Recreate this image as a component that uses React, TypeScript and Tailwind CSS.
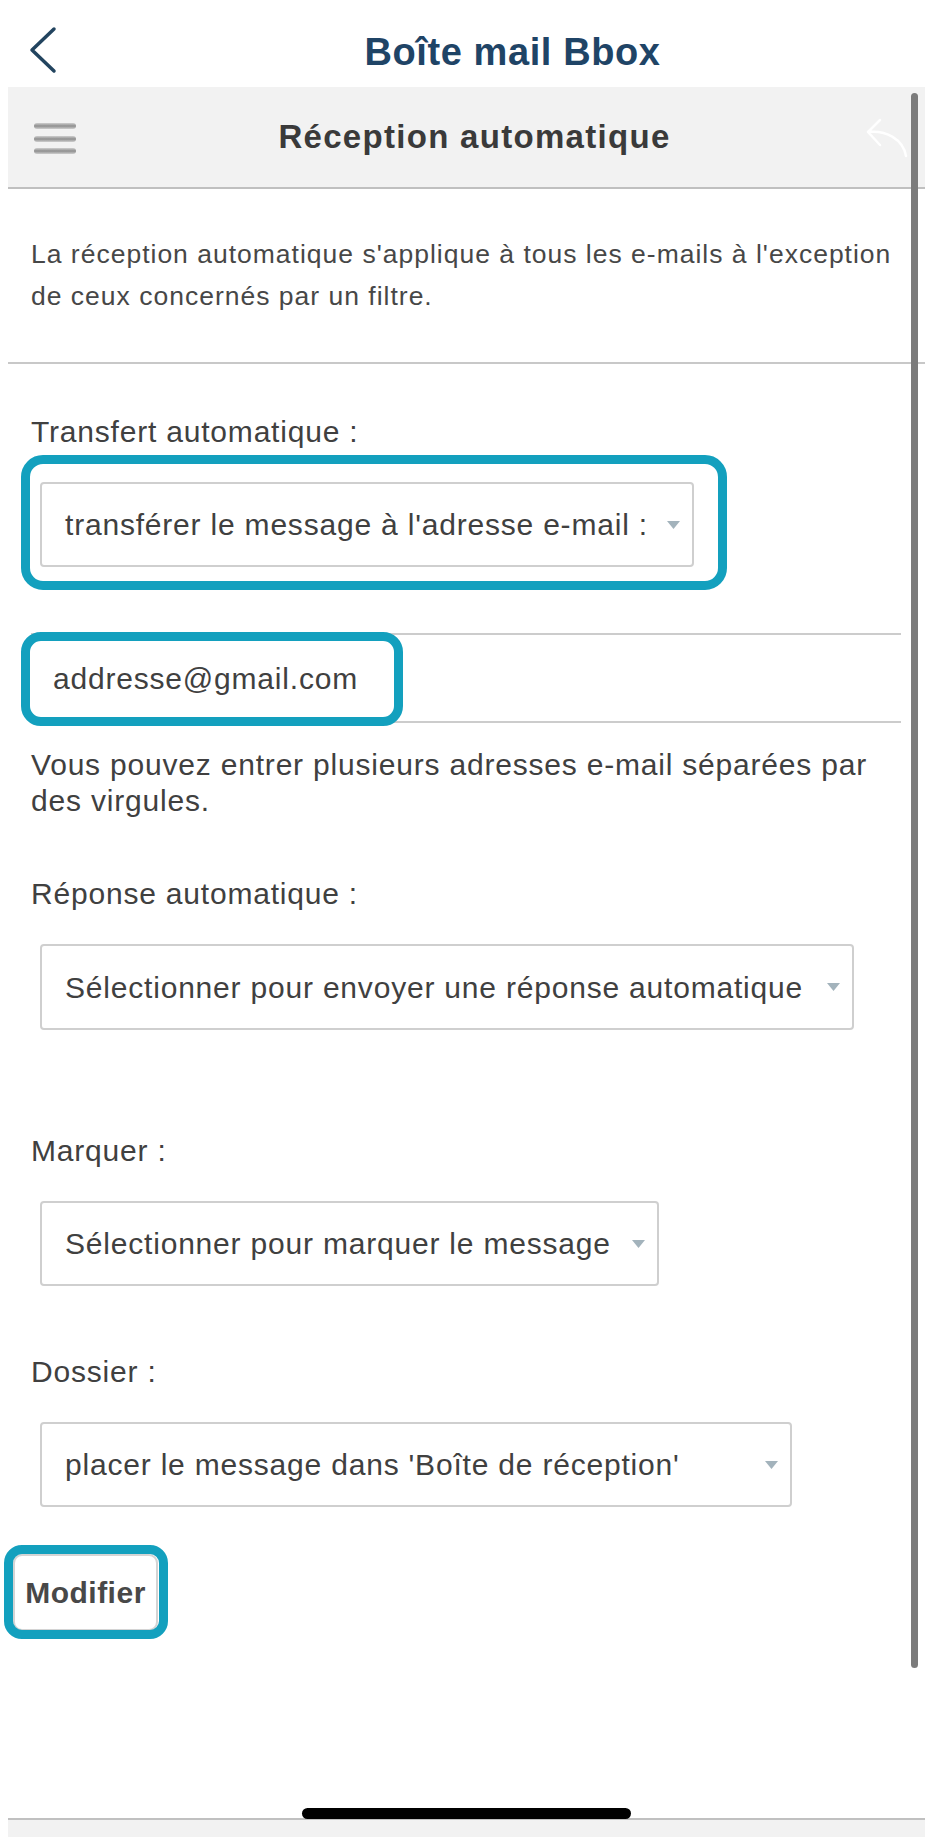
import React from "react";

function Caret() {
  return (
    <svg width="13" height="8" viewBox="0 0 13 8" className="shrink-0">
      <polygon points="0,0 13,0 6.5,8" fill="#a3b3bc" />
    </svg>
  );
}

function Select({ text, width, height }: { text: string; width: string; height: string }) {
  return (
    <div
      className={`ml-[32px] ${width} ${height} flex items-center justify-between pl-[23px] pr-[12px] border-2 border-[#cfcfcf] rounded-[4px] bg-white`}
    >
      <span className="whitespace-nowrap">{text}</span>
      <Caret />
    </div>
  );
}

function Label({ text, mt }: { text: string; mt: string }) {
  return <div className={`${mt} pl-[23px] leading-[36px] whitespace-nowrap`}>{text}</div>;
}

export default function App() {
  return (
    <div className="relative w-[925px] h-[1837px] bg-white overflow-hidden font-['Liberation_Sans',Arial,sans-serif] text-[#404040] text-[30px] tracking-[0.8px]">
      {/* Top native header */}
      <div className="h-[87px] flex">
        <div className="w-[100px] h-[87px] shrink-0">
          <svg width="100" height="87" viewBox="0 0 100 87">
            <polyline
              points="54,29 32,50 54,71"
              fill="none"
              stroke="#22445f"
              strokeWidth="3.5"
              strokeLinecap="round"
              strokeLinejoin="round"
            />
          </svg>
        </div>
        <div className="flex-1 text-center pt-[30px] leading-[44px] text-[38px] font-bold tracking-[0.6px] text-[#1f4466]">
          Boîte mail Bbox
        </div>
      </div>

      {/* Web view */}
      <div className="ml-[8px] h-[1750px] flex flex-col">
        {/* Gray bar */}
        <div className="h-[102px] shrink-0 bg-[#f2f2f2] border-b-2 border-[#c0c0c0] flex items-center">
          <div className="w-[100px] shrink-0 pl-[26px] flex flex-col gap-[6.5px] mt-[3px]">
            <div className="w-[42px] h-[6px] rounded-full bg-linear-to-b from-[#cfcfcf] via-[#8f8f8f] to-[#cfcfcf]" />
            <div className="w-[42px] h-[6px] rounded-full bg-linear-to-b from-[#cfcfcf] via-[#8f8f8f] to-[#cfcfcf]" />
            <div className="w-[42px] h-[6px] rounded-full bg-linear-to-b from-[#cfcfcf] via-[#8f8f8f] to-[#cfcfcf]" />
          </div>
          <div className="flex-1 text-center text-[33px] font-bold tracking-[1.3px] text-[#3a3a3a] whitespace-nowrap">
            Réception automatique
          </div>
          <div className="w-[84px] h-[100px] shrink-0">
            <svg width="84" height="100" viewBox="0 0 84 100">
              <path
                d="M39 33 L27 45 L39 58 M27 45 C45 43 62 52 65 69"
                fill="none"
                stroke="#ffffff"
                strokeWidth="2.5"
                strokeLinecap="round"
                strokeLinejoin="round"
              />
            </svg>
          </div>
        </div>

        {/* Intro paragraph */}
        <div className="mt-[44px] pl-[23px] pr-[25px] text-[26.5px] leading-[42px] tracking-[1px] text-[#474747]">
          La réception automatique s'applique à tous les e-mails à l'exception de ceux concernés par un filtre.
        </div>

        <div className="mt-[45px] h-[2px] shrink-0 bg-[#c8c8c8]" />

        <Label text="Transfert automatique :" mt="mt-[50px]" />
        <div className="mt-[32px]">
          <Select text="transférer le message à l'adresse e-mail :" width="w-[654px]" height="h-[85px]" />
        </div>

        {/* Email input */}
        <div className="mt-[66px] ml-[23px] w-[870px] h-[90px] shrink-0 border-y-2 border-[#cccccc] flex items-center pl-[22px]">
          addresse@gmail.com
        </div>

        <div className="mt-[24px] pl-[23px] pr-[25px] leading-[36px]">
          Vous pouvez entrer plusieurs adresses e-mail séparées par des virgules.
        </div>

        <Label text="Réponse automatique :" mt="mt-[57px]" />
        <div className="mt-[32px]">
          <Select text="Sélectionner pour envoyer une réponse automatique" width="w-[814px]" height="h-[86px]" />
        </div>

        <Label text="Marquer :" mt="mt-[103px]" />
        <div className="mt-[32px]">
          <Select text="Sélectionner pour marquer le message" width="w-[619px]" height="h-[85px]" />
        </div>

        <Label text="Dossier :" mt="mt-[68px]" />
        <div className="mt-[32px]">
          <Select text="placer le message dans 'Boîte de réception'" width="w-[752px]" height="h-[85px]" />
        </div>

        <div className="mt-[47px] ml-[5px] w-[145px] h-[77px] shrink-0 rounded-[9px] border-2 border-[#d4d4d4] bg-white flex items-center justify-center text-[30px] font-bold tracking-[0.5px] text-[#484848]">
          Modifier
        </div>

        <div className="flex-1" />

        <div className="h-[19px] shrink-0 border-t-2 border-[#c0c0c0] bg-[#f2f2f2]" />
      </div>

      {/* Annotation highlight boxes */}
      <div className="absolute left-[21px] top-[455px] w-[706px] h-[135px] border-[9px] border-[#13a0be] rounded-[22px]" />
      <div className="absolute left-[21px] top-[632px] w-[382px] h-[94px] border-[9px] border-[#13a0be] rounded-[20px]" />
      <div className="absolute left-[4px] top-[1545px] w-[164px] h-[94px] border-[9px] border-[#13a0be] rounded-[18px]" />

      {/* Scrollbar */}
      <div className="absolute left-[911px] top-[93px] w-[7px] h-[1575px] rounded-full bg-[#7b7b7b]" />

      {/* Home indicator */}
      <div className="absolute left-[302px] top-[1808px] w-[329px] h-[11px] rounded-full bg-black" />
    </div>
  );
}
